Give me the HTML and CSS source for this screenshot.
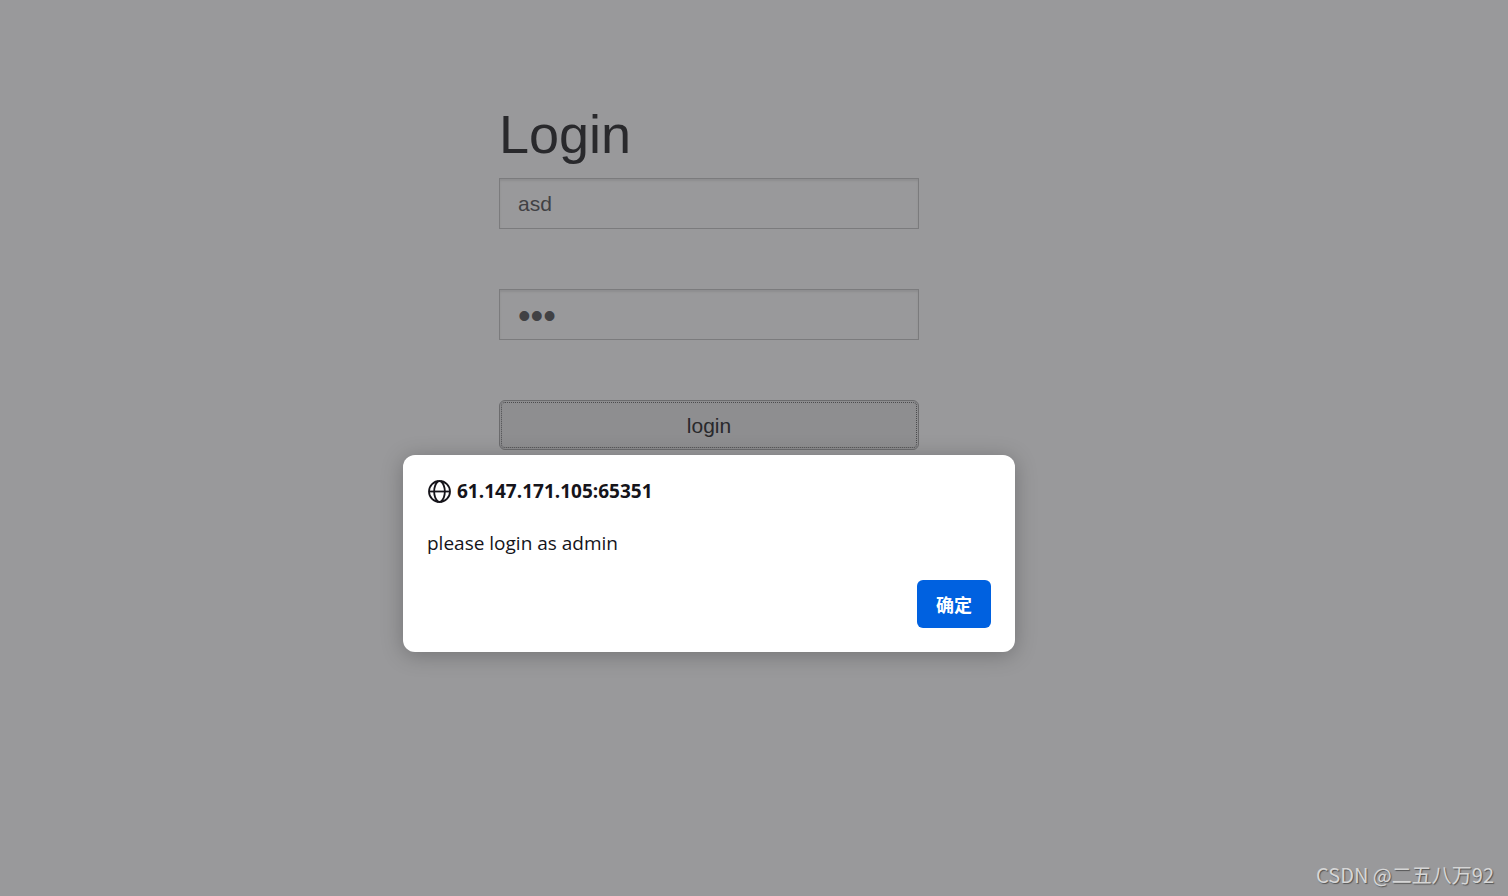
FILE: index.html
```html
<!DOCTYPE html>
<html lang="zh-CN">
<head>
    <meta charset="UTF-8">
    <meta name="viewport" content="width=device-width, initial-scale=1.0">
    <title>Login</title>
    <link rel="stylesheet" href="styles.css">
</head>
<body>

    <main class="page">
        <form class="login-form">
            <h1 class="login-title">Login</h1>
            <input class="form-control" type="text" name="username" value="asd" aria-label="username">
            <input class="form-control form-password" type="password" name="password" value="asd" aria-label="password">
            <button class="login-button" type="button">login</button>
        </form>
    </main>

    <!-- Alert -->
    <div class="overlay">
        <dialog class="alert" open>
            <div class="alert-header">
                <svg class="alert-icon" viewBox="0 0 24 24" fill="none" stroke="currentColor" stroke-width="1.8" aria-hidden="true">
                    <circle cx="12.5" cy="12.5" r="10.5"/>
                    <path d="M2 12.5h21"/>
                    <path d="M11.2 2C5.8 7.300 5.800 17.700 11.200 23M13.800 2c5.400 5.300 5.400 15.700 0 21"/>
                </svg>
                <strong class="alert-host">61.147.171.105:65351</strong>
            </div>
            <p class="alert-message">please login as admin</p>
            <form class="alert-actions" method="dialog">
                <button class="alert-button">确定</button>
            </form>
        </dialog>
    </div>

    <div class="watermark">CSDN @二五八万92</div>

</body>
</html>
```

FILE: styles.css
```css
* {
    box-sizing: border-box;
}

body {
    margin: 0;
    background-color: #99999b;
    color: #29292c;
    font-family: "Liberation Sans", Arial, sans-serif;
    font-size: 21px;
}

.page {
    display: flex;
    justify-content: center;
    min-height: 100vh;
    padding: 104px 90px 0 0;
}

.login-form {
    display: flex;
    flex-direction: column;
    width: 420px;
}

.login-title {
    margin: 0 0 14px;
    font-size: 54px;
    font-weight: normal;
    line-height: 60px;
}

.form-control {
    width: 100%;
    height: 51px;
    margin: 0 0 60px;
    padding: 0 18px;
    border: 1px solid #7b7b7d;
    border-radius: 0;
    background-color: transparent;
    box-shadow: inset 0 2px 2px rgba(0, 0, 0, 0.08);
    color: #414144;
    font-family: inherit;
    font-size: 21px;
    outline: none;
}

.form-password {
    padding-top: 2px;
    font-size: 36px;
}

.login-button {
    width: 100%;
    height: 50px;
    padding: 2px 0 0;
    border: 1px solid #6b6b6d;
    border-radius: 6px;
    background-color: #8e8e90;
    color: #29292c;
    font-family: inherit;
    font-size: 21px;
    outline: 1px dotted #4b4b4d;
    outline-offset: -3px;
}

.overlay {
    position: absolute;
    top: 455px;
    left: 0;
    right: 0;
    display: flex;
    justify-content: center;
    padding-right: 90px;
}

.alert {
    position: static;
    width: 612px;
    margin: 0;
    padding: 24px;
    border: none;
    border-radius: 12px;
    background-color: #fff;
    box-shadow: 0 3px 21px rgba(0, 0, 0, 0.25);
    color: #15141a;
    font-family: "Open Sans", "Noto Sans CJK SC", sans-serif;
    font-size: 19px;
    line-height: 24px;
}

.alert-header {
    display: flex;
    align-items: center;
    gap: 6px;
}

.alert-icon {
    width: 24px;
    height: 24px;
}

.alert-message {
    margin: 28px 0 25px;
}

.alert-actions {
    display: flex;
    justify-content: flex-end;
}

.alert-button {
    width: 74px;
    height: 48px;
    padding: 0;
    border: none;
    border-radius: 6px;
    background-color: #0061e0;
    color: #fff;
    font-family: "Noto Sans CJK SC", sans-serif;
    font-size: 18px;
    font-weight: bold;
}

.watermark {
    position: absolute;
    right: 14px;
    bottom: 6px;
    color: #d6d6d6;
    font-family: "Noto Sans CJK SC", sans-serif;
    font-size: 20px;
    line-height: 30px;
    text-shadow: 1px 1px 1px #555;
}
```
